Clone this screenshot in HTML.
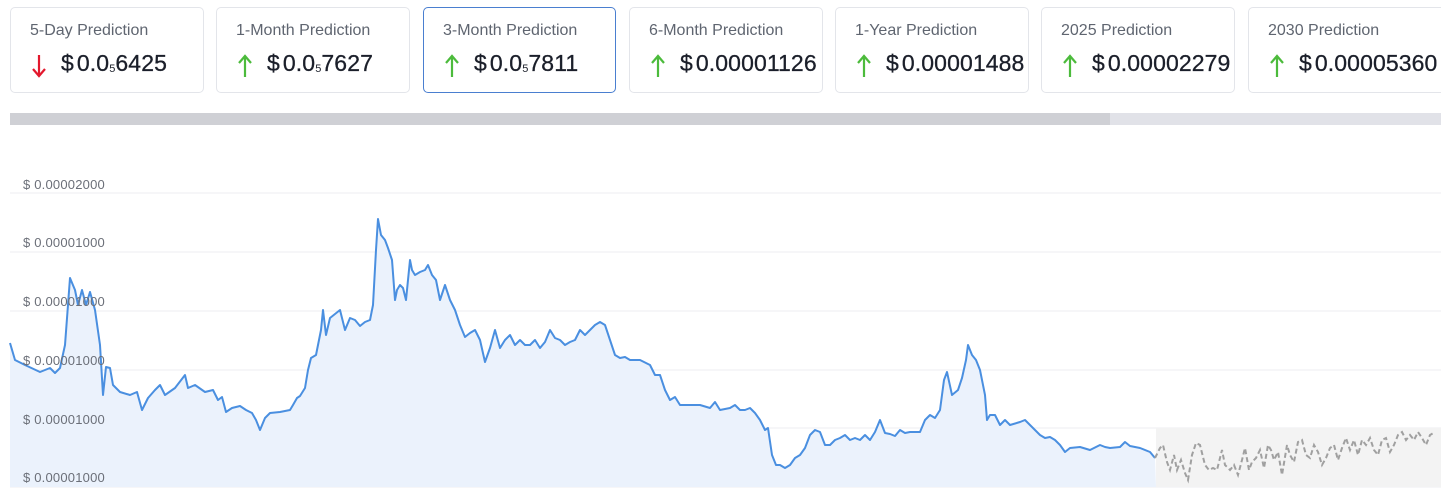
<!DOCTYPE html>
<html><head><meta charset="utf-8"><style>
body{margin:0;width:1441px;height:496px;overflow:hidden;background:#fff;font-family:"Liberation Sans",sans-serif;position:relative}
.card{position:absolute;top:7px;width:194px;height:86px;border:1px solid #e3e5ea;border-radius:5px;box-sizing:border-box;background:#fff}
.card.sel{border-color:#4a7fd0}
.t{position:absolute;left:19px;top:14px;font-size:16px;color:#5f6570}
.v{position:absolute;left:50px;top:42px;font-size:23px;color:#1b1f2a;letter-spacing:0.1px;white-space:nowrap;-webkit-text-stroke:0.3px #1b1f2a}
.v b{font-weight:normal;margin-right:3px}
.v sub{font-size:11px;vertical-align:-1px;-webkit-text-stroke:0}
.a{position:absolute;left:20px;top:45px;width:16px;height:26px}
.lbl{position:absolute;left:23px;font-size:13px;color:#6b6f78;letter-spacing:0.2px}
</style></head><body>
<div class="card" style="left:10px"><div class="t">5-Day Prediction</div><svg class="a" viewBox="0 0 16 26"><path d="M8 2V23M2 16L8 23L14 16" stroke="#e3182d" stroke-width="2.2" fill="none"/></svg><div class="v"><b>$</b>0.0<sub>5</sub>6425</div></div>
<div class="card" style="left:216px"><div class="t">1-Month Prediction</div><svg class="a" viewBox="0 0 16 26"><path d="M8 24V3M2 10L8 3L14 10" stroke="#4cbb3c" stroke-width="2.2" fill="none"/></svg><div class="v"><b>$</b>0.0<sub>5</sub>7627</div></div>
<div class="card sel" style="left:423px;width:193px"><div class="t">3-Month Prediction</div><svg class="a" viewBox="0 0 16 26"><path d="M8 24V3M2 10L8 3L14 10" stroke="#4cbb3c" stroke-width="2.2" fill="none"/></svg><div class="v"><b>$</b>0.0<sub>5</sub>7811</div></div>
<div class="card" style="left:629px"><div class="t">6-Month Prediction</div><svg class="a" viewBox="0 0 16 26"><path d="M8 24V3M2 10L8 3L14 10" stroke="#4cbb3c" stroke-width="2.2" fill="none"/></svg><div class="v"><b>$</b>0.00001126</div></div>
<div class="card" style="left:835px"><div class="t">1-Year Prediction</div><svg class="a" viewBox="0 0 16 26"><path d="M8 24V3M2 10L8 3L14 10" stroke="#4cbb3c" stroke-width="2.2" fill="none"/></svg><div class="v"><b>$</b>0.00001488</div></div>
<div class="card" style="left:1041px"><div class="t">2025 Prediction</div><svg class="a" viewBox="0 0 16 26"><path d="M8 24V3M2 10L8 3L14 10" stroke="#4cbb3c" stroke-width="2.2" fill="none"/></svg><div class="v"><b>$</b>0.00002279</div></div>
<div class="card" style="left:1248px;width:200px"><div class="t">2030 Prediction</div><svg class="a" viewBox="0 0 16 26"><path d="M8 24V3M2 10L8 3L14 10" stroke="#4cbb3c" stroke-width="2.2" fill="none"/></svg><div class="v"><b>$</b>0.00005360</div></div>
<div style="position:absolute;left:10px;top:113px;width:1431px;height:12px;background:#e1e2e8"></div>
<div style="position:absolute;left:10px;top:113px;width:1100px;height:12px;background:#cfd0d5"></div>
<svg style="position:absolute;left:0;top:0" width="1441" height="496">
<g stroke="#f0f1f3" stroke-width="1.2"><line x1="10" x2="1441" y1="193" y2="193"/><line x1="10" x2="1441" y1="252" y2="252"/><line x1="10" x2="1441" y1="311" y2="311"/><line x1="10" x2="1441" y1="370" y2="370"/><line x1="10" x2="1441" y1="428" y2="428"/><line x1="10" x2="1441" y1="487" y2="487"/></g>
<rect x="1156" y="428" width="285" height="59" fill="#f3f3f3"/>
<polygon fill="#ebf2fc" points="10,343 15,360 25,365 40,372 50,368 55,373 60,368 65,345 70,278 75,290 78,305 82,290 86,305 90,292 95,310 100,345 103,395 106,367 110,368 113,385 120,392 130,395 137,392 142,410 148,398 155,390 160,385 165,395 175,388 185,375 188,388 195,385 205,392 213,390 218,400 222,397 226,412 232,408 240,406 246,410 252,413 256,420 260,430 265,418 270,413 280,412 290,410 293,405 297,398 300,396 305,388 308,370 311,358 316,355 321,330 323,310 326,335 330,318 335,314 340,310 345,330 350,318 355,320 360,326 365,322 370,320 373,305 376,250 378,219 381,235 385,240 388,248 392,260 395,300 397,290 400,285 403,288 406,300 410,260 412,270 415,275 420,272 425,270 428,265 432,275 436,280 440,300 445,285 450,300 455,310 460,325 465,337 470,333 475,330 480,340 485,362 490,348 495,330 500,348 505,340 510,335 515,345 520,340 525,345 530,345 535,340 540,348 545,342 550,330 555,338 560,340 565,345 570,342 575,340 580,330 585,335 590,330 595,325 600,322 605,325 610,340 615,355 620,358 625,357 630,360 640,360 650,365 655,375 660,375 665,390 670,400 675,397 680,405 690,405 700,405 710,408 715,402 720,410 730,408 735,405 740,410 745,410 750,408 755,413 760,420 765,430 768,428 772,455 776,465 780,465 785,468 790,465 795,458 800,455 805,448 810,435 815,430 820,432 825,445 830,445 835,440 840,438 845,435 850,440 855,438 860,440 865,435 870,440 875,432 880,420 885,433 890,434 895,436 900,430 905,433 910,432 920,432 925,420 930,415 935,418 940,410 944,380 947,372 952,395 958,390 962,378 966,360 968,345 972,355 976,360 980,370 985,395 987,420 990,415 995,415 1000,425 1005,420 1010,425 1020,422 1025,420 1030,425 1035,430 1040,435 1045,438 1050,437 1055,440 1060,445 1065,452 1070,448 1080,447 1090,450 1100,445 1105,447 1110,448 1120,447 1125,442 1130,446 1140,448 1150,452 1155,458 1156,487 10,487"/>
<polyline fill="none" stroke="#4a8fe0" stroke-width="2" stroke-linejoin="round" points="10,343 15,360 25,365 40,372 50,368 55,373 60,368 65,345 70,278 75,290 78,305 82,290 86,305 90,292 95,310 100,345 103,395 106,367 110,368 113,385 120,392 130,395 137,392 142,410 148,398 155,390 160,385 165,395 175,388 185,375 188,388 195,385 205,392 213,390 218,400 222,397 226,412 232,408 240,406 246,410 252,413 256,420 260,430 265,418 270,413 280,412 290,410 293,405 297,398 300,396 305,388 308,370 311,358 316,355 321,330 323,310 326,335 330,318 335,314 340,310 345,330 350,318 355,320 360,326 365,322 370,320 373,305 376,250 378,219 381,235 385,240 388,248 392,260 395,300 397,290 400,285 403,288 406,300 410,260 412,270 415,275 420,272 425,270 428,265 432,275 436,280 440,300 445,285 450,300 455,310 460,325 465,337 470,333 475,330 480,340 485,362 490,348 495,330 500,348 505,340 510,335 515,345 520,340 525,345 530,345 535,340 540,348 545,342 550,330 555,338 560,340 565,345 570,342 575,340 580,330 585,335 590,330 595,325 600,322 605,325 610,340 615,355 620,358 625,357 630,360 640,360 650,365 655,375 660,375 665,390 670,400 675,397 680,405 690,405 700,405 710,408 715,402 720,410 730,408 735,405 740,410 745,410 750,408 755,413 760,420 765,430 768,428 772,455 776,465 780,465 785,468 790,465 795,458 800,455 805,448 810,435 815,430 820,432 825,445 830,445 835,440 840,438 845,435 850,440 855,438 860,440 865,435 870,440 875,432 880,420 885,433 890,434 895,436 900,430 905,433 910,432 920,432 925,420 930,415 935,418 940,410 944,380 947,372 952,395 958,390 962,378 966,360 968,345 972,355 976,360 980,370 985,395 987,420 990,415 995,415 1000,425 1005,420 1010,425 1020,422 1025,420 1030,425 1035,430 1040,435 1045,438 1050,437 1055,440 1060,445 1065,452 1070,448 1080,447 1090,450 1100,445 1105,447 1110,448 1120,447 1125,442 1130,446 1140,448 1150,452 1155,458"/>
<polyline fill="none" stroke="#a0a0a0" stroke-width="2" stroke-dasharray="5,3" points="1155,458 1160,448 1163,445 1167,462 1170,470 1174,455 1177,470 1181,460 1185,473 1188,480 1192,455 1196,443 1200,445 1205,465 1209,470 1213,468 1217,470 1222,450 1225,465 1230,470 1234,465 1238,475 1242,460 1245,448 1249,470 1252,462 1256,458 1260,450 1264,468 1268,445 1271,450 1274,460 1278,452 1282,475 1287,445 1290,455 1294,462 1298,442 1302,440 1306,455 1310,458 1314,445 1318,452 1322,465 1326,458 1330,448 1334,445 1338,460 1342,448 1346,438 1350,450 1354,440 1358,455 1362,440 1366,445 1370,438 1374,450 1378,455 1382,440 1386,438 1390,452 1394,445 1398,435 1402,432 1406,440 1410,435 1414,440 1418,432 1422,438 1426,445 1430,435 1435,432"/>
</svg>
<div class="lbl" style="top:177px">$ 0.00002000</div>
<div class="lbl" style="top:235px">$ 0.00001000</div>
<div class="lbl" style="top:294px">$ 0.00001000</div>
<div class="lbl" style="top:353px">$ 0.00001000</div>
<div class="lbl" style="top:412px">$ 0.00001000</div>
<div class="lbl" style="top:470px">$ 0.00001000</div>
</body></html>
